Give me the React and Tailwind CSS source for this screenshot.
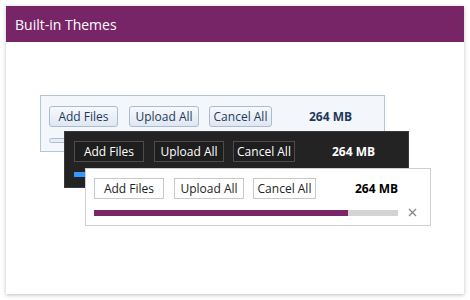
import React from "react";

const font = { fontFamily: '"Open Sans", "Noto Sans", sans-serif' };

const LightPanel = () => (
    <div className="relative z-10 ml-[34px] w-[345px] h-[57px] border border-[#b4c6dc] bg-[#f3f6fa] pt-[10px] pl-[8px]">
        <div className="flex items-center">
            <button className="w-[69px] h-[21px] rounded-[3px] border border-[#a9bcd3] bg-gradient-to-b from-[#f7f9fc] to-[#dfe7f1] text-[12px] text-[#1e395b] leading-none">
                Add Files
            </button>
            <button className="ml-[11px] w-[70px] h-[21px] rounded-[3px] border border-[#a9bcd3] bg-gradient-to-b from-[#f7f9fc] to-[#dfe7f1] text-[12px] text-[#1e395b] leading-none">
                Upload All
            </button>
            <button className="ml-[10px] w-[63px] h-[21px] rounded-[3px] border border-[#a9bcd3] bg-gradient-to-b from-[#f7f9fc] to-[#dfe7f1] text-[12px] text-[#1e395b] leading-none">
                Cancel All
            </button>
            <span className="ml-[37px] text-[12px] font-bold text-[#1e395b]">264 MB</span>
        </div>
        <div className="mt-[11px] w-[300px] h-[5px] rounded-full border border-[#a9bcd3] bg-[#e9eef4]"></div>
    </div>
);

const DarkPanel = () => (
    <div className="relative z-20 ml-[58px] -mt-[21px] w-[345px] h-[57px] border border-[#3a3a3a] bg-[#232323] pt-[9px] pl-[9px]">
        <div className="flex items-center">
            <button className="w-[70px] h-[21px] border border-[#4d4d4d] bg-[#1e1e1e] text-[12px] text-white leading-none">
                Add Files
            </button>
            <button className="ml-[10px] w-[70px] h-[21px] border border-[#4d4d4d] bg-[#1e1e1e] text-[12px] text-white leading-none">
                Upload All
            </button>
            <button className="ml-[9px] w-[62px] h-[21px] border border-[#4d4d4d] bg-[#1e1e1e] text-[12px] text-white leading-none">
                Cancel All
            </button>
            <span className="ml-[37px] text-[12px] font-bold text-white">264 MB</span>
        </div>
        <div className="mt-[10px] w-[300px] h-[5px] bg-[#3a3a3a]">
            <div className="h-full w-[250px] bg-[#3399ff]"></div>
        </div>
    </div>
);

const WhitePanel = () => (
    <div className="relative z-30 ml-[79px] -mt-[20px] w-[346px] h-[58px] border border-[#d0d0d0] bg-white pt-[9px] pl-[8px]">
        <div className="flex items-center">
            <button className="w-[70px] h-[21px] border border-[#c9c9c9] bg-white text-[12px] text-[#222] leading-none">
                Add Files
            </button>
            <button className="ml-[10px] w-[70px] h-[21px] border border-[#c9c9c9] bg-white text-[12px] text-[#222] leading-none">
                Upload All
            </button>
            <button className="ml-[9px] w-[63px] h-[21px] border border-[#c9c9c9] bg-white text-[12px] text-[#222] leading-none">
                Cancel All
            </button>
            <span className="ml-[39px] text-[12px] font-bold text-black">264 MB</span>
        </div>
        <div className="mt-[9px] flex items-center">
            <div className="w-[304px] h-[6px] bg-[#d4d4d4]">
                <div className="h-full w-[254px] bg-[#7a2568]"></div>
            </div>
            <svg className="ml-[10px]" width="9" height="9" viewBox="0 0 9 9">
                <path d="M1 1L8 8M8 1L1 8" stroke="#8a8a8a" strokeWidth="1.4" />
            </svg>
        </div>
    </div>
);

const App = () => {
    return (
        <div className="w-[470px] h-[300px] bg-white p-[6px]" style={font}>
            <div className="w-[458px] h-[288px] bg-white shadow-[0_1px_4px_rgba(0,0,0,0.25)]">
                <div className="h-[36px] bg-[#782568] flex items-center pl-[9px]">
                    <span className="text-[14px] text-white">Built-in Themes</span>
                </div>
                <div className="pt-[53px]">
                    <LightPanel />
                    <DarkPanel />
                    <WhitePanel />
                </div>
            </div>
        </div>
    );
};

export default App
